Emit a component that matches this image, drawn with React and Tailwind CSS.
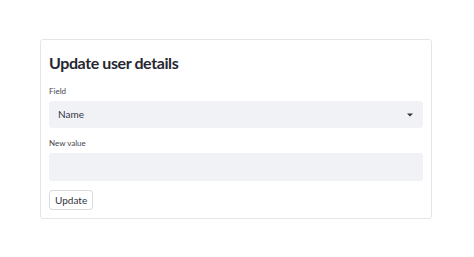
export default function App() {
  return (
    <div className="w-[474px] h-[257px] bg-white" style={{ fontFamily: 'Lato, "Noto Sans", sans-serif' }}>
      <div className="pt-[39px] pl-[40px]">
        <div className="w-[392px] h-[180px] border border-[#e4e5e8] rounded-[3px] px-[8px] pt-[12px]">
          <div className="text-[16px] font-bold text-[#262730] leading-[22px] tracking-[-0.4px]">Update user details</div>
          <div className="mt-[12px] text-[8px] text-[#44464f] leading-[10px]">Field</div>
          <div className="mt-[5px] h-[27px] bg-[#f0f2f6] rounded-[3px] flex items-center justify-between pl-[9px] pr-[10px]">
            <span className="text-[10px] text-[#31333f]">Name</span>
            <svg width="6" height="4" viewBox="0 0 6 4"><path d="M0 0.5h6L3 3.5z" fill="#31333f" /></svg>
          </div>
          <div className="mt-[10px] text-[8px] text-[#44464f] leading-[10px]">New value</div>
          <div className="mt-[5px] h-[28px] bg-[#f0f2f6] rounded-[3px]" />
          <button className="mt-[9px] h-[20px] px-[5px] border border-[#d9dadd] rounded-[3px] bg-white text-[10px] text-[#31333f] leading-none">Update</button>
        </div>
      </div>
    </div>
  );
}
